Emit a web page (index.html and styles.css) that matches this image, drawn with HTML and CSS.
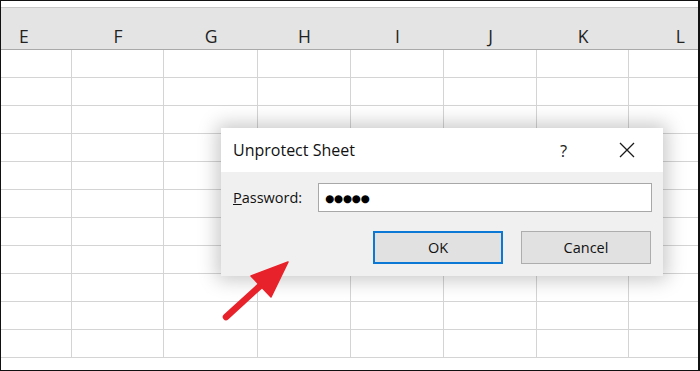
FILE: index.html
```html
<!DOCTYPE html>
<html>
<head>
<meta charset="utf-8">
<link rel="stylesheet" href="styles.css">
</head>
<body>
<div class="frame">
  <div class="topstrip"></div>
  <div class="sheet">
    <div class="hdr">E</div><div class="hdr">F</div><div class="hdr">G</div><div class="hdr">H</div><div class="hdr">I</div><div class="hdr">J</div><div class="hdr">K</div><div class="hdr last">L</div>
    <div class="c"></div><div class="c"></div><div class="c"></div><div class="c"></div><div class="c"></div><div class="c"></div><div class="c"></div><div class="c last"></div>
    <div class="c"></div><div class="c"></div><div class="c"></div><div class="c"></div><div class="c"></div><div class="c"></div><div class="c"></div><div class="c last"></div>
    <div class="c"></div><div class="c"></div><div class="c"></div><div class="c"></div><div class="c"></div><div class="c"></div><div class="c"></div><div class="c last"></div>
    <div class="c"></div><div class="c"></div><div class="c"></div><div class="c"></div><div class="c"></div><div class="c"></div><div class="c"></div><div class="c last"></div>
    <div class="c"></div><div class="c"></div><div class="c"></div><div class="c"></div><div class="c"></div><div class="c"></div><div class="c"></div><div class="c last"></div>
    <div class="c"></div><div class="c"></div><div class="c"></div><div class="c"></div><div class="c"></div><div class="c"></div><div class="c"></div><div class="c last"></div>
    <div class="c"></div><div class="c"></div><div class="c"></div><div class="c"></div><div class="c"></div><div class="c"></div><div class="c"></div><div class="c last"></div>
    <div class="c"></div><div class="c"></div><div class="c"></div><div class="c"></div><div class="c"></div><div class="c"></div><div class="c"></div><div class="c last"></div>
    <div class="c"></div><div class="c"></div><div class="c"></div><div class="c"></div><div class="c"></div><div class="c"></div><div class="c"></div><div class="c last"></div>
    <div class="c"></div><div class="c"></div><div class="c"></div><div class="c"></div><div class="c"></div><div class="c"></div><div class="c"></div><div class="c last"></div>
    <div class="c"></div><div class="c"></div><div class="c"></div><div class="c"></div><div class="c"></div><div class="c"></div><div class="c"></div><div class="c last"></div>
  </div>

  <div class="dialog">
    <div class="titlebar">
      <span class="title">Unprotect Sheet</span>
      <span class="help">?</span>
      <svg class="close" width="16" height="16" viewBox="0 0 16 16"><path d="M1 1L15 15M15 1L1 15" stroke="#1a1a1a" stroke-width="1.3" fill="none"/></svg>
    </div>
    <div class="dbody">
      <div class="pwrow">
        <span class="label"><u>P</u>assword:</span>
        <div class="input">●●●●●</div>
      </div>
      <div class="btns">
        <div class="btn primary">OK</div>
        <div class="btn">Cancel</div>
      </div>
    </div>
  </div>

  <svg class="arrow" width="80" height="70" viewBox="0 0 80 70">
    <line x1="6" y1="60" x2="40" y2="29" stroke="#e8222a" stroke-width="6.5" stroke-linecap="round"/>
    <polygon points="68,5 31,19 51,40" fill="#e8222a" stroke="#e8222a" stroke-width="1.5" stroke-linejoin="round"/>
  </svg>
</div>
</body>
</html>
```

FILE: styles.css
```css
* { box-sizing: border-box; }
html, body { margin: 0; padding: 0; background: #fff; }
.frame {
  position: relative;
  width: 700px;
  height: 371px;
  border: 1px solid #111;
  border-right-width: 2px;
  overflow: hidden;
  background: #fff;
  font-family: "Open Sans", "Noto Sans", sans-serif;
}
.topstrip {
  height: 7px;
  border-bottom: 1px solid #c8c8c8;
  background: #fff;
}
.sheet {
  display: grid;
  grid-template-columns: 71px 92px 94px 93px 93px 93px 92px 1fr;
  grid-template-rows: 42px repeat(11, 28px);
}
.hdr {
  position: relative;
  background: #e4e4e4;
  border-bottom: 1px solid #a9a9a9;
  display: flex;
  align-items: center;
  justify-content: center;
  padding-top: 14px;
  font-size: 17.5px;
  color: #222;
}
.hdr::after {
  content: "";
  position: absolute;
  right: -1px;
  top: 14px;
  bottom: 0;
  width: 1px;
  background: #b4b4b4;
}
.hdr.last::after { display: none; }
.hdr:first-child { justify-content: flex-start; padding-left: 18px; }
.hdr.last { justify-content: flex-end; padding-right: 13px; }
.c {
  border-right: 1px solid #d4d4d4;
  border-bottom: 1px solid #d4d4d4;
}
.c.last { border-right: none; }

.dialog {
  position: absolute;
  left: 220px;
  top: 127px;
  width: 442px;
  height: 148px;
  background: #f0f0f0;
  box-shadow: 0 0 18px 4px rgba(0,0,0,0.22);
  display: flex;
  flex-direction: column;
  color: #000;
}
.titlebar {
  height: 44px;
  background: #fff;
  display: flex;
  align-items: center;
  padding-left: 12px;
  padding-right: 28px;
}
.title { font-size: 16px; flex: 1; color: #111; }
.help { font-size: 16.5px; color: #222; margin-right: 52px; }
.close { display: block; }
.dbody {
  flex: 1;
  padding: 11px 11px 0 12px;
  display: flex;
  flex-direction: column;
}
.pwrow {
  display: flex;
  align-items: center;
  height: 29px;
}
.label { font-size: 14.5px; width: 85px; color: #111; }
.input {
  flex: 1;
  height: 29px;
  background: #fff;
  border: 1px solid #a8a8a8;
  font-family: "DejaVu Sans", sans-serif;
  font-size: 10.5px;
  letter-spacing: -0.3px;
  padding-left: 6px;
  display: flex;
  align-items: center;
  color: #000;
}
.btns {
  display: flex;
  justify-content: flex-end;
  gap: 18px;
  margin-top: 19px;
  padding-right: 1px;
}
.btn {
  width: 130px;
  height: 33px;
  background: #e1e1e1;
  border: 1px solid #adadad;
  display: flex;
  align-items: center;
  justify-content: center;
  font-size: 14.5px;
  color: #111;
}
.btn.primary { border: 2px solid #0a78d4; }
.arrow {
  position: absolute;
  left: 219px;
  top: 256px;
}
```
